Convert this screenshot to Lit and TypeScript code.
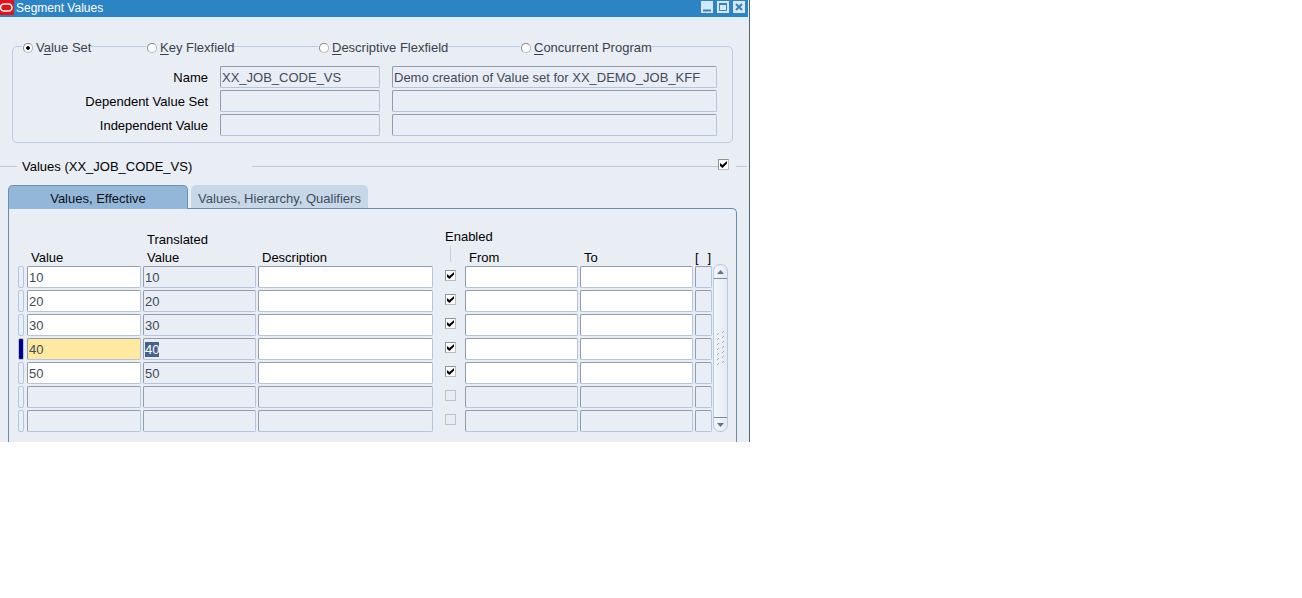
import { LitElement, html, css, svg, nothing } from "lit";
import { customElement, property, state } from "lit/decorators.js";
import { classMap } from "lit/directives/class-map.js";

interface Row {
  value: string;
  enabled: boolean;
}

const ROWS: Row[] = [
  { value: "10", enabled: true },
  { value: "20", enabled: true },
  { value: "30", enabled: true },
  { value: "40", enabled: true },
  { value: "50", enabled: true },
  { value: "", enabled: false },
  { value: "", enabled: false },
];

const shared = css`
  * {
    box-sizing: border-box;
  }
  input,
  button {
    font: inherit;
    color: inherit;
    margin: 0;
  }
  .field {
    display: block;
    width: 100%;
    min-width: 0;
    height: 22px;
    padding: 0 1px;
    border: 1px solid #b4c5dd;
    border-top-color: #939cab;
    border-left-color: #939cab;
    border-radius: 2px;
    background: #e9edf5;
    color: #414a58;
    outline: none;
    line-height: 18px;
  }
  .field.editable {
    background: #fff;
  }
  .field.current {
    background: #ffe9a0;
  }
  .field::selection {
    background: #46618f;
    color: #fff;
  }
  .check {
    appearance: none;
    display: block;
    flex: none;
    width: 11px;
    height: 11px;
    border: 1px solid #b9bcc0;
    border-top-color: #8f9296;
    border-left-color: #8f9296;
    background: #fff;
  }
  .check:checked {
    background: #fff
      url("data:image/svg+xml,%3Csvg xmlns='http://www.w3.org/2000/svg' viewBox='0 0 9 9'%3E%3Cpath d='M1 3v3l2.5 2L8 3.500V1L3.500 5z' fill='%23000'/%3E%3C/svg%3E")
      center / 9px 9px no-repeat;
  }
  .check:disabled {
    background: #e9edf2;
    border-color: #bfc3c6;
  }
`;

@customElement("value-set-criteria")
export class ValueSetCriteria extends LitElement {
  static styles = [
    shared,
    css`
      :host {
        display: block;
      }
      .frame {
        border: 1px solid #bdcce0;
        border-radius: 5px;
        padding-bottom: 6px;
      }
      .modes {
        display: grid;
        grid-template-columns: 124px 172px 202px auto;
        padding-left: 9px;
        height: 19px;
        margin-top: -9px;
      }
      .mode {
        justify-self: start;
        display: flex;
        align-items: center;
        gap: 3px;
        line-height: 18px;
        padding-left: 1px;
        background: #e9edf4;
        color: #3a424f;
        white-space: nowrap;
      }
      .caption {
        padding-top: 1px;
      }
      .key {
        text-decoration: underline;
        text-underline-offset: 2px;
        text-decoration-thickness: 1px;
      }
      .radio {
        appearance: none;
        width: 10px;
        height: 10px;
        border: 1px solid #b3b6bb;
        border-top-color: #85888e;
        border-left-color: #85888e;
        border-radius: 50%;
        background: #fff;
      }
      .radio:checked {
        background: radial-gradient(circle, #111 0 2px, #fff 2px);
      }
      .lines {
        display: grid;
        grid-template-columns: 195px 160px 1fr;
        column-gap: 12px;
        row-gap: 2px;
        padding: 9px 15px 0 0;
        align-items: center;
      }
      .label {
        text-align: right;
        line-height: 22px;
        height: 22px;
        padding-top: 1px;
        color: #000;
      }
    `,
  ];

  @state() private mode = "Value Set";

  private modes = [
    ["V", "a", "lue Set"],
    ["", "K", "ey Flexfield"],
    ["", "D", "escriptive Flexfield"],
    ["", "C", "oncurrent Program"],
  ];

  private lines = [
    ["name", "Name", "XX_JOB_CODE_VS", "Demo creation of Value set for XX_DEMO_JOB_KFF"],
    ["dependent", "Dependent Value Set", "", ""],
    ["independent", "Independent Value", "", ""],
  ];

  render() {
    return html`
      <div class="frame">
        <div class="modes" role="radiogroup" aria-label="Find values by">
          ${this.modes.map(([before, key, after]) => {
            const name = before + key + after;
            return html`<label class="mode">
              <input
                class="radio"
                type="radio"
                name="mode"
                .checked=${this.mode === name}
                @change=${() => (this.mode = name)}
              /><span class="caption">${before}<span class="key">${key}</span>${after}</span>
            </label>`;
          })}
        </div>
        <div class="lines">
          ${this.lines.map(
            ([id, label, value, description]) => html`
              <label class="label" for=${id}>${label}</label>
              <input class="field" id=${id} type="text" readonly .value=${value} />
              <input
                class="field"
                type="text"
                readonly
                aria-label="${label} description"
                .value=${description}
              />
            `
          )}
        </div>
      </div>
    `;
  }
}

@customElement("values-table")
export class ValuesTable extends LitElement {
  static styles = [
    shared,
    css`
      :host {
        display: flex;
        align-items: flex-end;
      }
      .table {
        flex: 1;
        width: 100%;
        min-width: 0;
        table-layout: fixed;
        border-collapse: separate;
        border-spacing: 0;
      }
      .c-mark {
        width: 9px;
      }
      .c-value {
        width: 116px;
      }
      .c-date {
        width: 115px;
      }
      .c-check {
        width: 30px;
      }
      .c-flex {
        width: 19px;
      }
      th {
        height: 56px;
        padding: 0 0 0 5px;
        vertical-align: bottom;
        text-align: left;
        font-weight: normal;
        line-height: 18px;
        color: #000;
        white-space: nowrap;
      }
      th.enabled {
        padding-left: 11px;
      }
      th.flex {
        padding-left: 1px;
      }
      .head {
        display: block;
        margin-bottom: -2px;
      }
      .brackets {
        display: flex;
        justify-content: space-between;
        padding-right: 2px;
      }
      .stem {
        width: 1px;
        height: 16px;
        margin: 0 0 5px 5px;
        background: #c3cedb;
      }
      td {
        height: 24px;
        padding: 1px;
      }
      td.mark {
        padding-right: 2px;
      }
      td.tick {
        padding: 0 0 4px 11px;
      }
      .marker {
        display: block;
        width: 6px;
        height: 22px;
        padding: 0;
        border: 1px solid #b4c5dd;
        border-radius: 2px;
        background: #e6effa;
      }
      .marker.current {
        background: #00008a;
        border-color: #b4c5dd;
      }
      .scroll {
        flex: none;
        width: 15px;
        height: 168px;
        margin-bottom: 1px;
        display: flex;
        flex-direction: column;
        border: 1px solid #b8c8de;
        border-radius: 7px;
        background: linear-gradient(to right, #f3f7fc, #e4eaf3);
        overflow: hidden;
      }
      .arrow {
        display: flex;
        justify-content: center;
        align-items: center;
        height: 14px;
        padding: 0;
        border: 0;
        background: none;
        border-bottom: 1px solid #7f8ca0;
      }
      .arrow.down {
        border-bottom: 0;
        border-top: 1px solid #7f8ca0;
      }
      .thumb {
        flex: 1;
        display: flex;
        justify-content: center;
        align-items: center;
      }
    `,
  ];

  @property({ attribute: false }) rows: Row[] = [];
  @property({ type: Number }) current = 0;

  firstUpdated() {
    const input = this.renderRoot.querySelector<HTMLInputElement>("#translated-" + this.current);
    input?.focus();
    input?.select();
  }

  private text(kind: string, label: string, index: number, value = "") {
    const row = this.rows[index];
    const filled = row.value !== "";
    const classes = {
      field: true,
      editable: filled && kind !== "translated" && kind !== "flex",
      current: kind === "value" && index === this.current,
    };
    return html`<td>
      <input
        class=${classMap(classes)}
        id="${kind}-${index}"
        type="text"
        aria-label="${label} ${index + 1}"
        .value=${value}
      />
    </td>`;
  }

  private grip() {
    const dots = [];
    for (let y = 0; y < 7; y++) {
      dots.push(svg`<path d="M0 ${y * 5 + 5}l2-2M5 ${y * 5 + 3}l2-2" stroke="#a3adbb" stroke-width="1" />`);
    }
    return html`<svg width="8" height="36" viewBox="0 0 8 36" aria-hidden="true">${dots}</svg>`;
  }

  render() {
    return html`
      <table class="table">
        <colgroup>
          <col class="c-mark" />
          <col class="c-value" />
          <col class="c-date" />
          <col />
          <col class="c-check" />
          <col class="c-date" />
          <col class="c-date" />
          <col class="c-flex" />
        </colgroup>
        <thead>
          <tr>
            <th></th>
            <th><span class="head">Value</span></th>
            <th><span class="head">Translated<br />Value</span></th>
            <th><span class="head">Description</span></th>
            <th class="enabled"><span class="head">Enabled<div class="stem"></div></span></th>
            <th><span class="head">From</span></th>
            <th><span class="head">To</span></th>
            <th class="flex"><span class="head brackets"><span>[</span><span>]</span></span></th>
          </tr>
        </thead>
        <tbody>
          ${this.rows.map(
            (row, i) => html`<tr>
              <td class="mark">
                <button
                  class=${classMap({ marker: true, current: i === this.current })}
                  aria-label="Select record ${i + 1}"
                ></button>
              </td>
              ${this.text("value", "Value", i, row.value)}
              ${this.text("translated", "Translated value", i, row.value)}
              ${this.text("description", "Description", i)}
              <td class="tick">
                <input
                  class="check"
                  type="checkbox"
                  aria-label="Enabled ${i + 1}"
                  .checked=${row.enabled}
                  ?disabled=${row.value === ""}
                />
              </td>
              ${this.text("from", "From", i)} ${this.text("to", "To", i)}
              ${this.text("flex", "Flexfield", i)}
            </tr>`
          )}
        </tbody>
      </table>
      <div class="scroll">
        <button class="arrow" aria-label="Scroll up">
          <svg width="7" height="4" viewBox="0 0 7 4"><path d="M3.500 0L7 4H0z" fill="#66707f" /></svg>
        </button>
        <div class="thumb">${this.grip()}</div>
        <button class="arrow down" aria-label="Scroll down">
          <svg width="7" height="4" viewBox="0 0 7 4"><path d="M3.500 4L7 0H0z" fill="#66707f" /></svg>
        </button>
      </div>
    `;
  }
}

@customElement("app-root")
export class AppRoot extends LitElement {
  static styles = [
    shared,
    css`
      :host {
        display: block;
        font: 13px/18px "Liberation Sans", Arial, sans-serif;
        color: #000;
      }
      .window {
        max-width: 750px;
        border-right: 1px solid #4b6580;
        background: #e9edf4;
      }
      .titlebar {
        display: flex;
        align-items: flex-start;
        height: 17px;
        background: #2c84c4;
        color: #fff;
        padding-right: 3px;
        margin-right: 1px;
      }
      .logo {
        flex: none;
        display: block;
      }
      .title {
        flex: 1;
        margin: 0;
        padding-left: 2px;
        font-size: 12px;
        line-height: 16px;
        font-weight: normal;
      }
      .controls {
        display: flex;
        gap: 4px;
        padding-top: 1px;
      }
      .control {
        display: block;
        width: 12px;
        height: 12px;
        padding: 0;
        border: 0;
        background: #d3e9fa;
      }
      .control svg {
        display: block;
      }
      .criteria {
        padding: 25px 16px 0 12px;
        border-top: 4px solid #e1effb;
      }
      .section {
        display: flex;
        align-items: center;
        height: 18px;
        margin-top: 14px;
      }
      .rule {
        height: 1px;
        background: #bccada;
      }
      .rule.lead {
        width: 17px;
      }
      .rule.fill {
        flex: 1;
      }
      .rule.tail {
        width: 11px;
        margin: 0 2px 0 7px;
      }
      .heading {
        margin: 0;
        width: 235px;
        padding: 1px 0 0 5px;
        font-size: 13px;
        font-weight: normal;
        white-space: nowrap;
      }
      .section .check {
        margin-bottom: 4px;
      }
      .tabs {
        display: flex;
        gap: 3px;
        margin: 10px 12px 0 8px;
        height: 23px;
      }
      .tab {
        height: 23px;
        padding: 4px 0 0;
        border: 0;
        border-radius: 5px 5px 0 0;
        line-height: 18px;
        text-align: center;
        background: #c8d7e8;
        color: #404c5c;
        width: 177px;
      }
      .tab.active {
        z-index: 1;
        width: 180px;
        height: 24px;
        padding-top: 3px;
        border: 1px solid #6f8fb0;
        border-bottom: 0;
        background: #93b7d8;
        color: #0c1118;
      }
      .panel {
        margin: 0 12px 0 8px;
        padding: 0 8px 9px;
        border: 1px solid #6f8aa8;
        border-bottom: 0;
        border-radius: 0 5px 0 0;
        background: linear-gradient(#e6f0fb, #e9edf4 8px);
      }
    `,
  ];

  @state() private tab = 0;

  private tabs = ["Values, Effective", "Values, Hierarchy, Qualifiers"];

  render() {
    return html`
      <main class="window">
        <header class="titlebar">
          <svg class="logo" width="14" height="15" viewBox="0 0 14 15" aria-hidden="true">
            <rect width="14" height="15" fill="#e3131b" />
            <rect x="0.500" y="4" width="11.500" height="7" rx="3.500" fill="none" stroke="#fff" stroke-width="1.600" />
          </svg>
          <h1 class="title">Segment Values</h1>
          <div class="controls">
            <button class="control" aria-label="Minimize">
              <svg width="12" height="12"><path d="M2 9.500h8" stroke="#3e80b4" stroke-width="2" /></svg>
            </button>
            <button class="control" aria-label="Maximize">
              <svg width="12" height="12">
                <path d="M2.500 3h7v6.500h-7z" fill="none" stroke="#3e80b4" />
                <path d="M2 3h8" stroke="#3e80b4" stroke-width="2" />
              </svg>
            </button>
            <button class="control" aria-label="Close">
              <svg width="12" height="12"><path d="M3 3l6 6M9 3l-6 6" stroke="#3e80b4" stroke-width="2" /></svg>
            </button>
          </div>
        </header>
        <div class="criteria"><value-set-criteria></value-set-criteria></div>
        <div class="section">
          <div class="rule lead"></div>
          <h2 class="heading">Values (XX_JOB_CODE_VS)</h2>
          <div class="rule fill"></div>
          <input class="check" type="checkbox" checked aria-label="Values section" />
          <div class="rule tail"></div>
        </div>
        <div class="tabs" role="tablist">
          ${this.tabs.map(
            (name, i) => html`<button
              role="tab"
              aria-selected=${this.tab === i ? "true" : "false"}
              class=${classMap({ tab: true, active: this.tab === i })}
              @click=${() => (this.tab = i)}
            >
              ${name}
            </button>`
          )}
        </div>
        <section class="panel" role="tabpanel">
          ${this.tab === 0
            ? html`<values-table .rows=${ROWS} .current=${3}></values-table>`
            : nothing}
        </section>
      </main>
    `;
  }
}
